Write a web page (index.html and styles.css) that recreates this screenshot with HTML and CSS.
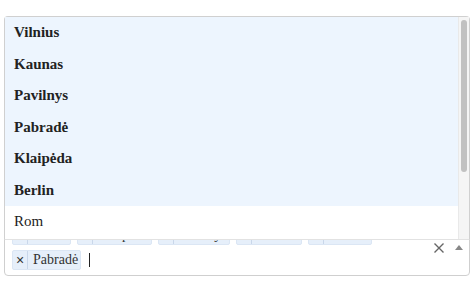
FILE: index.html
```html
<!DOCTYPE html>
<html>
<head>
<meta charset="utf-8">
<link rel="stylesheet" href="styles.css">
</head>
<body>
<div class="select">
  <div class="selection">
    <ul class="chips">
      <li class="chip"><span class="chip-x">×</span><span class="chip-label">Berlin</span></li>
      <li class="chip"><span class="chip-x">×</span><span class="chip-label">Klaipėda</span></li>
      <li class="chip"><span class="chip-x">×</span><span class="chip-label">Pavilnys</span></li>
      <li class="chip"><span class="chip-x">×</span><span class="chip-label">Kaunas</span></li>
      <li class="chip"><span class="chip-x">×</span><span class="chip-label">Vilnius</span></li>
      <li class="chip"><span class="chip-x">×</span><span class="chip-label">Pabradė</span></li>
      <li class="search"><span class="caret"></span></li>
    </ul>
    <span class="clear"><svg width="12" height="12" viewBox="0 0 12 12"><path d="M1.5 1.5 L10.5 10.5 M10.5 1.5 L1.5 10.5" stroke="#666" stroke-width="1.4" fill="none"/></svg></span>
    <span class="arrow"></span>
  </div>
  <div class="dropdown">
    <ul class="results">
      <li class="option selected">Vilnius</li>
      <li class="option selected">Kaunas</li>
      <li class="option selected">Pavilnys</li>
      <li class="option selected">Pabradė</li>
      <li class="option selected">Klaipėda</li>
      <li class="option selected">Berlin</li>
      <li class="option">Rom</li>
      <li class="option">Paris</li>
      <li class="option">London</li>
      <li class="option">Madrid</li>
    </ul>
    <div class="scrollbar"><div class="thumb"></div></div>
  </div>
</div>
</body>
</html>
```

FILE: styles.css
```css
html, body {
  margin: 0;
  padding: 0;
  background: #fff;
}
body {
  font-family: "Liberation Serif", "Times New Roman", serif;
  font-size: 15px;
  color: #222;
}
.select {
  position: relative;
  margin: 219px 4px 0 4px;
  width: 466px;
}
.selection {
  box-sizing: border-box;
  border: 1px solid #cfcfcf;
  border-radius: 4px;
  display: flex;
  align-items: center;
  min-height: 54px;
  padding: 0 6px 0 0;
}
.chips {
  list-style: none;
  margin: 0;
  padding: 0 0 5px 1px;
  flex: 1;
  display: flex;
  flex-wrap: wrap;
  align-items: flex-start;
}
.chip {
  display: flex;
  margin: 5px 0 0 6px;
  background: #e6effa;
  border: 1px solid #dbe6f4;
  border-radius: 2px;
  line-height: 18px;
  font-size: 14px;
  color: #333;
}
.chip-x {
  width: 14px;
  text-align: center;
  border-right: 1px solid #c9d7ea;
  font-family: "Liberation Sans", Arial, sans-serif;
  font-size: 14px;
  color: #333;
}
.chip-label {
  padding: 0 2px 0 5px;
}
.search {
  margin: 5px 0 0 8px;
  height: 20px;
  display: flex;
  align-items: center;
}
.caret {
  display: block;
  width: 1px;
  height: 14px;
  background: #222;
}
.clear {
  display: flex;
  width: 12px;
  height: 12px;
  margin: 1px 10px 0 10px;
}
.arrow {
  width: 0;
  height: 0;
  border-left: 4px solid transparent;
  border-right: 4px solid transparent;
  border-bottom: 5px solid #888;
  margin-top: -1px;
}
.dropdown {
  position: absolute;
  left: 0;
  right: 0;
  top: -203px;
  box-sizing: border-box;
  border: 1px solid #d0d0d0;
  border-bottom-color: #e2e2e2;
  border-radius: 4px 4px 0 0;
  background: #fff;
  display: flex;
}
.results {
  list-style: none;
  margin: 0;
  padding: 0;
  height: 222px;
  overflow: hidden;
  flex: 1;
}
.scrollbar {
  width: 11px;
  background: #f5f5f5;
  border-left: 1px solid #e9e9e9;
  padding: 3px 2px 0 2px;
  box-sizing: border-box;
}
.thumb {
  height: 152px;
  background: #c1c1c1;
  border-radius: 4px;
}
.option {
  padding: 7px 9px;
  line-height: 17.5px;
}
.option.selected {
  background: #edf5fe;
  font-weight: bold;
}
```
